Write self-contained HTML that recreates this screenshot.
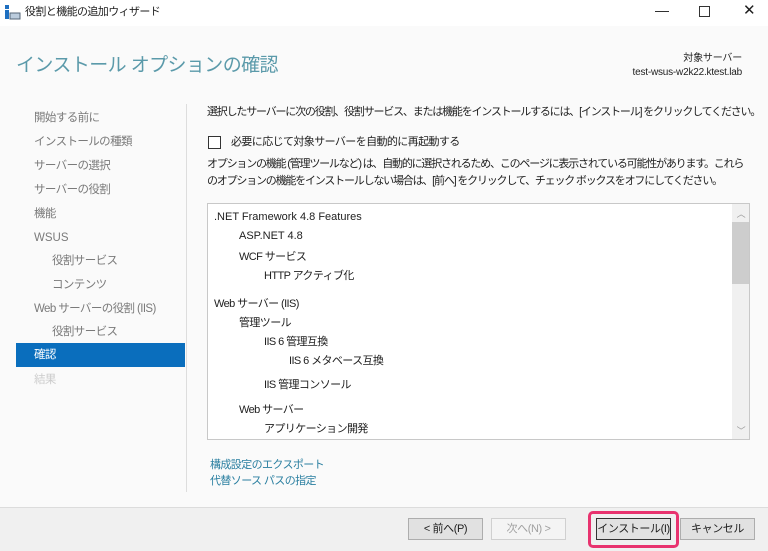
<!DOCTYPE html>
<html><head><meta charset="utf-8"><style>
*{margin:0;padding:0;box-sizing:border-box}
body{width:768px;height:551px;overflow:hidden;background:#fafafa;font-family:"Liberation Sans","Noto Sans CJK JP",sans-serif;font-size:11px;letter-spacing:-0.6px;color:#1e1e1e;position:relative}
.a{position:absolute;white-space:nowrap;line-height:16px}
.nav{color:#7a7a7a;font-size:11.5px}
.l{letter-spacing:0}
.p{letter-spacing:-1.2px}
.btn{position:absolute;top:518px;height:22px;border:1px solid #adadad;background:#e1e1e1;text-align:center;line-height:20px;font-size:11px;white-space:nowrap;overflow:hidden;letter-spacing:-0.4px}
</style></head><body>
<div style="position:absolute;left:0;top:0;width:768px;height:26px;background:#fff"></div>
<svg class="a" style="left:5px;top:4px" width="16" height="16"><rect x="0" y="1" width="4" height="4" fill="#1e6fc0"/><rect x="0" y="6" width="4" height="9" fill="#1e6fc0"/><rect x="5" y="9" width="10" height="6" fill="#bcd" stroke="#567" stroke-width="1"/></svg>
<div class="a" style="left:25px;top:4px">役割と機能の追加ウィザード</div>
<div class="a" style="left:655px;top:2px;font-size:14px">—</div>
<div class="a" style="left:699px;top:6px;width:11px;height:11px;border:1px solid #333"></div>
<div class="a" style="left:743px;top:3px;font-size:15px">✕</div>
<div class="a" style="left:16px;top:51px;font-size:19px;letter-spacing:-0.6px;line-height:30px;color:#5b9aaa">インストール オプションの確認</div>
<div class="a" style="right:26px;top:52px;font-size:10px;text-align:right;line-height:14px;letter-spacing:-0.2px">対象サーバー<br>test-wsus-w2k22.ktest.lab</div>
<div style="position:absolute;left:186px;top:104px;width:1px;height:388px;background:#ddd"></div>
<div class="a nav" style="left:34px;top:110px">開始する前に</div>
<div class="a nav" style="left:34px;top:134px">インストールの種類</div>
<div class="a nav" style="left:34px;top:158px">サーバーの選択</div>
<div class="a nav" style="left:34px;top:182px">サーバーの役割</div>
<div class="a nav" style="left:34px;top:206px">機能</div>
<div class="a nav l" style="left:34px;top:230px">WSUS</div>
<div class="a nav" style="left:52px;top:253px">役割サービス</div>
<div class="a nav" style="left:52px;top:277px">コンテンツ</div>
<div class="a nav" style="left:34px;top:301px">Web サーバーの役割 (IIS)</div>
<div class="a nav" style="left:52px;top:324px">役割サービス</div>
<div style="position:absolute;left:16px;top:343px;width:169px;height:24px;background:#0a6ebd"></div>
<div class="a nav" style="left:34px;top:347px;color:#fff">確認</div>
<div class="a nav" style="left:34px;top:372px;color:#ccc">結果</div>
<div class="a p" style="left:207px;top:104px">選択したサーバーに次の役割、役割サービス、または機能をインストールするには、[インストール] をクリックしてください。</div>
<div class="a" style="left:208px;top:136px;width:13px;height:13px;border:1px solid #333;background:#fff"></div>
<div class="a" style="left:231px;top:134px">必要に応じて対象サーバーを自動的に再起動する</div>
<div class="a p" style="left:207px;top:156px;line-height:17px">オプションの機能 (管理ツールなど) は、自動的に選択されるため、このページに表示されている可能性があります。これら<br>のオプションの機能をインストールしない場合は、[前へ] をクリックして、チェック ボックスをオフにしてください。</div>
<div style="position:absolute;left:207px;top:203px;width:543px;height:237px;border:1px solid #c8c8c8;background:#fff;overflow:hidden">
<div style="position:absolute;right:0;top:0;width:17px;height:235px;background:#f0f0f0"></div>
<div style="position:absolute;right:0;top:18px;width:17px;height:62px;background:#cdcdcd"></div>
<div class="a" style="right:4px;top:2px;color:#999;font-size:9px">︿</div>
<div class="a" style="right:4px;top:219px;color:#999;font-size:9px">﹀</div>
</div>
<div class="a l" style="left:214px;top:209px">.NET Framework 4.8 Features</div>
<div class="a l" style="left:239px;top:228px">ASP.NET 4.8</div>
<div class="a" style="left:239px;top:249px">WCF サービス</div>
<div class="a" style="left:264px;top:268px">HTTP アクティブ化</div>
<div class="a" style="left:214px;top:296px">Web サーバー (IIS)</div>
<div class="a" style="left:239px;top:315px">管理ツール</div>
<div class="a" style="left:264px;top:334px">IIS 6 管理互換</div>
<div class="a" style="left:289px;top:353px">IIS 6 メタベース互換</div>
<div class="a" style="left:264px;top:377px">IIS 管理コンソール</div>
<div class="a" style="left:239px;top:402px">Web サーバー</div>
<div class="a" style="left:264px;top:421px">アプリケーション開発</div>
<div class="a" style="left:210px;top:457px;color:#2a7fa0">構成設定のエクスポート</div>
<div class="a" style="left:210px;top:473px;color:#2a7fa0">代替ソース パスの指定</div>
<div style="position:absolute;left:0;top:507px;width:768px;height:44px;background:#f0f0f0;border-top:1px solid #dcdcdc"></div>
<div class="btn" style="left:408px;width:75px">&lt; 前へ(P)</div>
<div class="btn" style="left:491px;width:75px;color:#a0a0a0;background:#f4f4f4;border-color:#d0d0d0">次へ(N) &gt;</div>
<div style="position:absolute;left:588px;top:511px;width:91px;height:37px;border:3px solid #e8336f;border-radius:5px"></div>
<div class="btn" style="left:596px;width:75px;border-color:#333">インストール(I)</div>
<div class="btn" style="left:680px;width:75px">キャンセル</div>
</body></html>
